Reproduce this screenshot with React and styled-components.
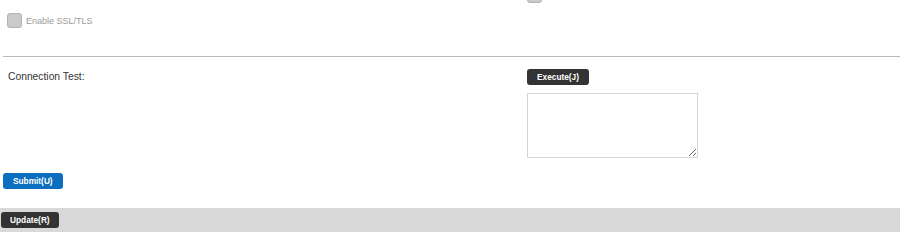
import React from 'react'
import styled, { createGlobalStyle } from 'styled-components'


const GlobalStyle = createGlobalStyle`
  html, body { margin: 0; padding: 0; background: #fff; }
  body {
    font-family: "Liberation Sans", Arial, sans-serif;
    width: 900px;
    height: 234px;
    overflow: hidden;
  }
`

const Page = styled.div`
  width: 900px;
  margin-top: -12px;
`

const OptionRows = styled.div`
  display: flex;
  flex-direction: column;
  gap: 10px;
  padding-bottom: 28px;
`

const Row = styled.div`
  display: grid;
  grid-template-columns: 527px 1fr;
  align-items: start;
`

const Cell = styled.div`
  padding-left: ${props => props.$pad || 0}px;
`

const CheckLabel = styled.label`
  display: flex;
  align-items: center;
  gap: 4px;
  height: 15px;
  font-size: 9px;
  color: #9a9a9a;
`

const Check = styled.input.attrs({ type: 'checkbox', disabled: true })`
  appearance: none;
  margin: 0;
  width: 15px;
  height: 15px;
  box-sizing: border-box;
  background: #cacaca;
  border: 1px solid #b3b3b3;
  border-radius: 3px;
`

const Divider = styled.hr`
  margin: 0 0 0 3px;
  border: 0;
  border-top: 1px solid #b9b9b9;
  height: 0;
`

const TestRow = styled(Row)`
  padding-top: 12px;
`

const Label = styled.div`
  padding: 2px 0 0 8px;
  font-size: 10.3px;
  color: #333;
`

const TestArea = styled.div`
  display: flex;
  flex-direction: column;
  align-items: flex-start;
  gap: 8px;
`

const Button = styled.button`
  display: block;
  height: 16px;
  padding: 0 ${props => props.$px || 10}px;
  border: 0;
  border-radius: 3px;
  background: ${props => props.$primary ? '#0c6ebf' : '#333333'};
  color: #fff;
  font-family: "Liberation Sans", Arial, sans-serif;
  font-size: 8.3px;
  font-weight: bold;
  line-height: 16px;
  cursor: pointer;
`

const Output = styled.textarea`
  display: block;
  margin: 0;
  width: 171px;
  height: 65px;
  box-sizing: border-box;
  border: 1px solid #d4d4d4;
  resize: both;
`

const Actions = styled.div`
  display: flex;
  padding: 15px 0 19px 3px;
`

const Footer = styled.div`
  display: flex;
  align-items: center;
  height: 24px;
  box-sizing: border-box;
  padding: 0 1px;
  background: #d9d9d9;
`


const App = () => {
  return (
    <>
      <GlobalStyle />
      <Page>
        <OptionRows>
          <Row>
            <Cell />
            <Cell>
              <CheckLabel><Check /></CheckLabel>
            </Cell>
          </Row>
          <Row>
            <Cell $pad={7}>
              <CheckLabel><Check />Enable SSL/TLS</CheckLabel>
            </Cell>
            <Cell />
          </Row>
        </OptionRows>
        <Divider />
        <TestRow>
          <Label>Connection Test:</Label>
          <TestArea>
            <Button $px={10}>Execute(J)</Button>
            <Output readOnly />
          </TestArea>
        </TestRow>
        <Actions>
          <Button $primary $px={10}>Submit(U)</Button>
        </Actions>
        <Footer>
          <Button $px={9}>Update(R)</Button>
        </Footer>
      </Page>
    </>
  )
}

export default App
